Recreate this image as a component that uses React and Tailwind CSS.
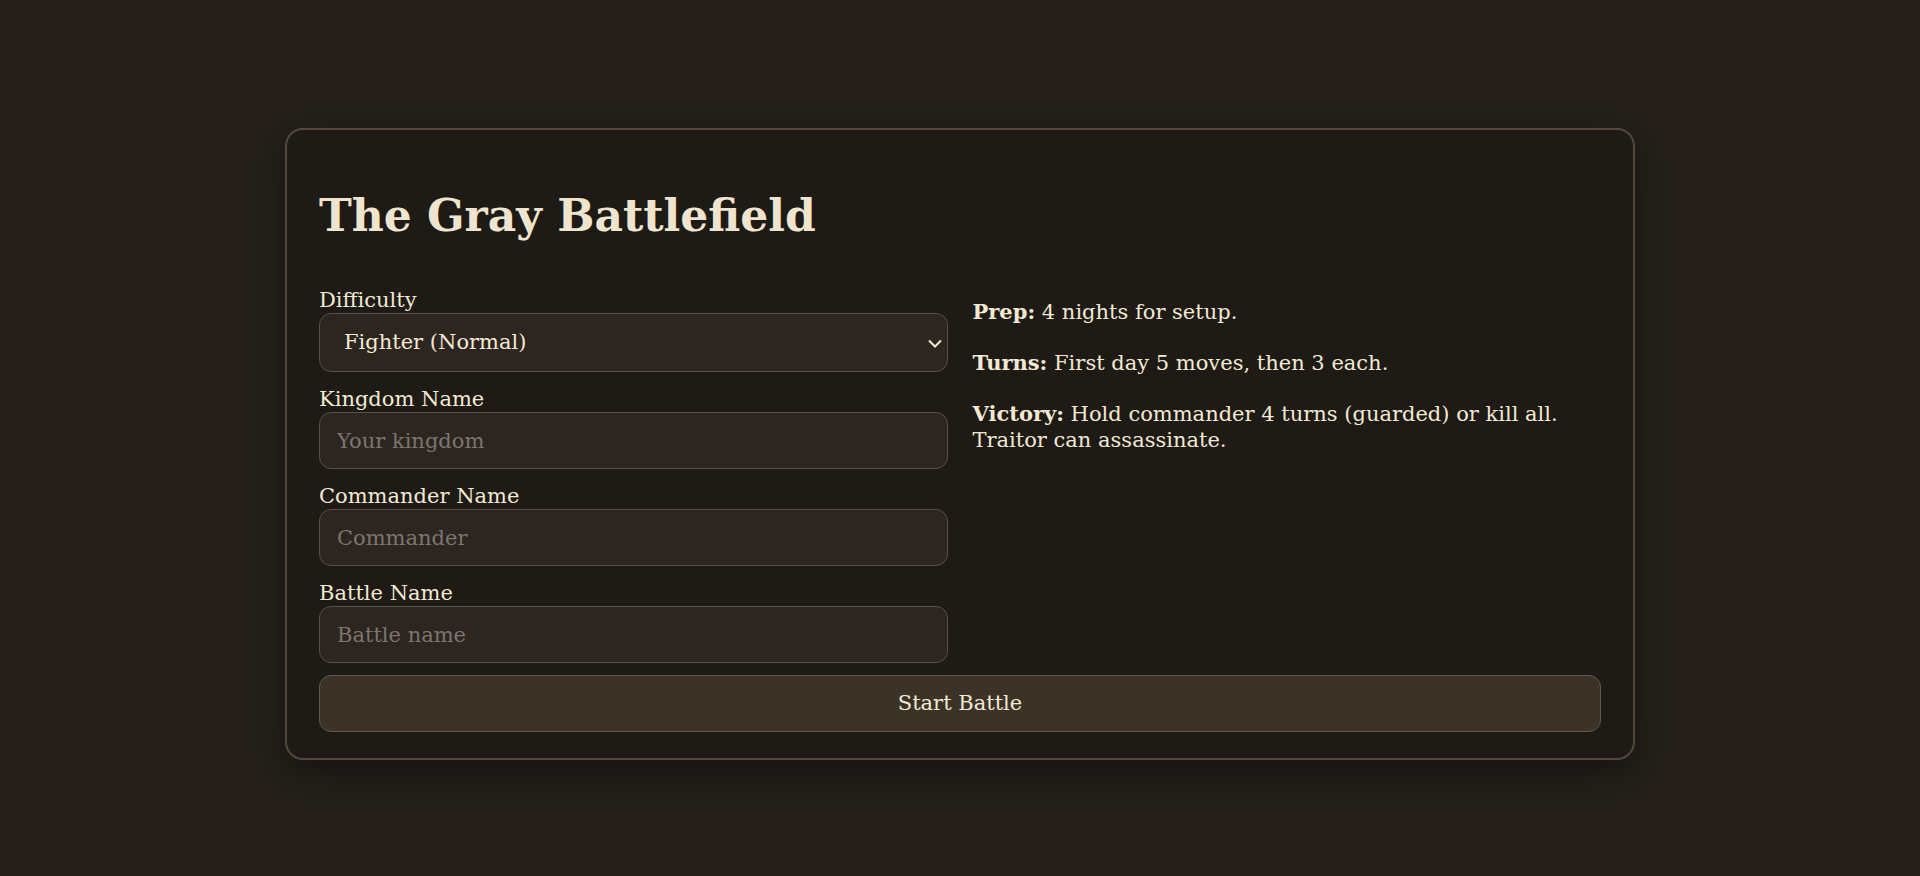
import React, { useState } from 'react';

function Field({ label, children }) {
  return (
    <label className="flex flex-col">
      <span className="text-[21px] leading-[26px]">{label}</span>
      {children}
    </label>
  );
}

export default function App() {
  const [difficulty, setDifficulty] = useState('fighter');
  const [kingdom, setKingdom] = useState('');
  const [commander, setCommander] = useState('');
  const [battle, setBattle] = useState('');

  const inputCls =
    "h-[57px] w-full rounded-[12px] border border-[#5a5043] bg-[#2d251f] px-[17px] text-[21px] text-[#f3e9d3] placeholder:text-[#7a766f] outline-none";

  return (
    <div className="min-h-screen bg-[#25201b] pt-[128px] font-['DejaVu_Serif',serif] text-[#f3e9d3]">
      <div className="mx-auto w-[1350px] rounded-[18px] border-2 border-[#51473a] bg-[#1e1a15] px-[32px] pt-[64px] pb-[26px] shadow-[0_12px_40px_rgba(0,0,0,0.45)]">
        <h1 className="text-[44px] font-bold leading-none text-[#efe5cf]">The Gray Battlefield</h1>

        <div className="mt-[49px] grid grid-cols-2 gap-x-[25px]">
          {/* form column */}
          <div className="flex flex-col gap-[14px]">
            <Field label="Difficulty">
              <div className="relative">
                <select
                  value={difficulty}
                  onChange={(e) => setDifficulty(e.target.value)}
                  className="h-[59px] w-full appearance-none rounded-[12px] border border-[#5a5043] bg-[#2d251f] pl-[24px] text-[21px] text-[#f3e9d3] outline-none"
                >
                  <option value="recruit">Recruit (Easy)</option>
                  <option value="fighter">Fighter (Normal)</option>
                  <option value="warlord">Warlord (Hard)</option>
                </select>
                <svg
                  className="pointer-events-none absolute right-[6px] top-[26px]"
                  width="14"
                  height="9"
                  viewBox="0 0 14 9"
                  fill="none"
                  stroke="#f3e9d3"
                  strokeWidth="2"
                >
                  <path d="M1 1.5l6 6 6-6" />
                </svg>
              </div>
            </Field>
            <Field label="Kingdom Name">
              <input className={inputCls} placeholder="Your kingdom" value={kingdom} onChange={(e) => setKingdom(e.target.value)} />
            </Field>
            <Field label="Commander Name">
              <input className={inputCls} placeholder="Commander" value={commander} onChange={(e) => setCommander(e.target.value)} />
            </Field>
            <Field label="Battle Name">
              <input className={inputCls} placeholder="Battle name" value={battle} onChange={(e) => setBattle(e.target.value)} />
            </Field>
          </div>

          {/* rules column */}
          <div className="flex flex-col gap-[25px] pt-[12px] text-[21px] leading-[26px]">
            <p><b>Prep:</b> 4 nights for setup.</p>
            <p><b>Turns:</b> First day 5 moves, then 3 each.</p>
            <p>
              <b>Victory:</b> Hold commander 4 turns (guarded) or kill all.
              <br />
              Traitor can assassinate.
            </p>
          </div>
        </div>

        <button className="mt-[12px] h-[57px] w-full rounded-[12px] border border-[#62584a] bg-[#3b3228] text-[21px] text-[#f3e9d3]">
          Start Battle
        </button>
      </div>
    </div>
  );
}
